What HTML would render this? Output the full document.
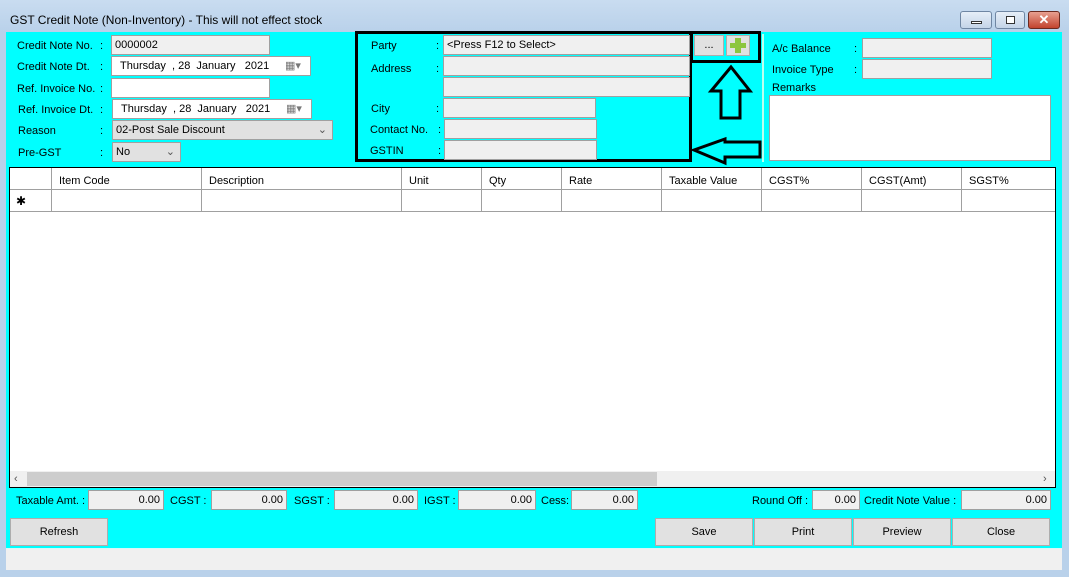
<!DOCTYPE html>
<html><head><style>
*{box-sizing:border-box;margin:0;padding:0}
body{width:1069px;height:577px;background:#b9d1ea;font-family:"Liberation Sans",sans-serif;font-size:11px;color:#000;position:relative;overflow:hidden}
.a{position:absolute}
.l{position:absolute;white-space:nowrap;line-height:14px}
.tb{position:absolute;background:#f0f0f0;border:1px solid #a0a0a0;height:20px;line-height:18px;padding-left:3px;white-space:nowrap}
.w{background:#fff}
.btn{position:absolute;background:#e1e1e1;border:1px solid #adadad;text-align:center;line-height:26px;height:28px}
.num{text-align:right;padding-right:3px}
</style></head><body>
<div class="a" style="left:0;top:0;width:1069px;height:32px;background:linear-gradient(#c9dcf0,#b9d1ea)"></div>
<div class="l" style="left:10px;top:13px;font-size:12px">GST Credit Note (Non-Inventory) - This will not effect stock</div>
<div class="a" style="left:960px;top:11px;width:32px;height:18px;border:1px solid #6f86a3;border-radius:3px;background:linear-gradient(#e6eef8,#c4d4e8)"><div class="a" style="left:10px;top:9px;width:11px;height:3px;border:1px solid #333;background:#fff"></div></div>
<div class="a" style="left:995px;top:11px;width:30px;height:18px;border:1px solid #6f86a3;border-radius:3px;background:linear-gradient(#e6eef8,#c4d4e8)"><div class="a" style="left:10px;top:4px;width:9px;height:8px;border:1px solid #333;background:#fff"></div></div>
<div class="a" style="left:1028px;top:11px;width:32px;height:18px;border:1px solid #6b2a20;border-radius:3px;background:linear-gradient(#e8a090,#c2432e);color:#fff;text-align:center;font-weight:bold;font-size:13px;line-height:16px">✕</div>

<div class="a" style="left:6px;top:32px;width:1056px;height:516px;background:#00ffff"></div>
<div class="a" style="left:6px;top:548px;width:1056px;height:22px;background:#f0f0f0;border-top:1px solid #d8f8f8"></div>

<!-- left block -->
<div class="l" style="left:17px;top:39px">Credit Note No.</div><div class="l" style="left:100px;top:39px">:</div>
<div class="tb" style="left:111px;top:35px;width:159px">0000002</div>
<div class="l" style="left:17px;top:60px">Credit Note Dt.</div><div class="l" style="left:100px;top:60px">:</div>
<div class="tb w" style="left:111px;top:56px;width:200px;padding-left:8px">Thursday &nbsp;, 28 &nbsp;January &nbsp;&nbsp;2021<span style="position:absolute;left:173px;top:0;color:#777">▦▾</span></div>
<div class="l" style="left:17px;top:82px">Ref. Invoice No.</div><div class="l" style="left:100px;top:82px">:</div>
<div class="tb w" style="left:111px;top:78px;width:159px"></div>
<div class="l" style="left:18px;top:103px">Ref. Invoice Dt.</div><div class="l" style="left:100px;top:103px">:</div>
<div class="tb w" style="left:112px;top:99px;width:200px;padding-left:8px">Thursday &nbsp;, 28 &nbsp;January &nbsp;&nbsp;2021<span style="position:absolute;left:173px;top:0;color:#777">▦▾</span></div>
<div class="l" style="left:18px;top:124px">Reason</div><div class="l" style="left:100px;top:124px">:</div>
<div class="tb" style="left:112px;top:120px;width:221px;background:#e1e1e1">02-Post Sale Discount<span style="position:absolute;right:5px;top:0;color:#555">⌄</span></div>
<div class="l" style="left:18px;top:146px">Pre-GST</div><div class="l" style="left:100px;top:146px">:</div>
<div class="tb" style="left:112px;top:142px;width:69px;background:#e1e1e1">No<span style="position:absolute;right:5px;top:0;color:#555">⌄</span></div>

<!-- party block -->
<div class="a" style="left:355px;top:31px;width:337px;height:131px;border:3px solid #000"></div>
<div class="a" style="left:690px;top:31px;width:71px;height:32px;border:3px solid #000"></div>
<div class="l" style="left:371px;top:39px">Party</div><div class="l" style="left:436px;top:39px">:</div>
<div class="tb" style="left:443px;top:35px;width:247px">&lt;Press F12 to Select&gt;</div>
<div class="l" style="left:371px;top:62px">Address</div><div class="l" style="left:436px;top:62px">:</div>
<div class="tb" style="left:443px;top:56px;width:247px"></div>
<div class="tb" style="left:443px;top:77px;width:247px"></div>
<div class="l" style="left:371px;top:102px">City</div><div class="l" style="left:436px;top:102px">:</div>
<div class="tb" style="left:443px;top:98px;width:153px"></div>
<div class="l" style="left:370px;top:123px">Contact No.</div><div class="l" style="left:438px;top:123px">:</div>
<div class="tb" style="left:444px;top:119px;width:153px"></div>
<div class="l" style="left:370px;top:144px">GSTIN</div><div class="l" style="left:438px;top:144px">:</div>
<div class="tb" style="left:444px;top:140px;width:153px"></div>
<div class="btn" style="left:694px;top:35px;width:30px;height:21px;line-height:19px">...</div>
<div class="btn" style="left:726px;top:35px;width:24px;height:21px"><div class="a" style="left:8px;top:2px;width:6px;height:15px;background:#8cc63f"></div><div class="a" style="left:3px;top:7px;width:16px;height:5px;background:#8cc63f"></div></div>
<svg class="a" style="left:0;top:0" width="1069" height="200"><path d="M731 67 L711 91 L721 91 L721 118 L740 118 L740 91 L750 91 Z" fill="none" stroke="#000" stroke-width="3"/><path d="M694 150 L725 139 L725 142 L760 142 L760 157 L725 157 L725 163 Z" fill="none" stroke="#000" stroke-width="3"/></svg>

<div class="a" style="left:762px;top:34px;width:2px;height:128px;background:#bfe"></div>
<div class="l" style="left:772px;top:42px">A/c Balance</div><div class="l" style="left:854px;top:42px">:</div>
<div class="tb" style="left:862px;top:38px;width:130px"></div>
<div class="l" style="left:772px;top:63px">Invoice Type</div><div class="l" style="left:854px;top:63px">:</div>
<div class="tb" style="left:862px;top:59px;width:130px"></div>
<div class="l" style="left:772px;top:81px">Remarks</div>
<div class="a" style="left:769px;top:95px;width:282px;height:66px;background:#fff;border:1px solid #a0a0a0"></div>

<!-- grid -->
<div class="a" style="left:9px;top:167px;width:1047px;height:321px;background:#fff;border:1px solid #000"></div>
<div class="a" style="left:10px;top:168px;width:1045px;height:22px;border-bottom:1px solid #a0a0a0"></div>
<div class="a" style="left:10px;top:190px;width:1045px;height:22px;border-bottom:1px solid #a0a0a0"></div>
<div class="a" style="left:51px;top:168px;width:1px;height:43px;background:#a0a0a0"></div>
<div class="a" style="left:201px;top:168px;width:1px;height:43px;background:#a0a0a0"></div>
<div class="a" style="left:401px;top:168px;width:1px;height:43px;background:#a0a0a0"></div>
<div class="a" style="left:481px;top:168px;width:1px;height:43px;background:#a0a0a0"></div>
<div class="a" style="left:561px;top:168px;width:1px;height:43px;background:#a0a0a0"></div>
<div class="a" style="left:661px;top:168px;width:1px;height:43px;background:#a0a0a0"></div>
<div class="a" style="left:761px;top:168px;width:1px;height:43px;background:#a0a0a0"></div>
<div class="a" style="left:861px;top:168px;width:1px;height:43px;background:#a0a0a0"></div>
<div class="a" style="left:961px;top:168px;width:1px;height:43px;background:#a0a0a0"></div>
<div class="l" style="left:59px;top:174px">Item Code</div>
<div class="l" style="left:209px;top:174px">Description</div>
<div class="l" style="left:409px;top:174px">Unit</div>
<div class="l" style="left:489px;top:174px">Qty</div>
<div class="l" style="left:569px;top:174px">Rate</div>
<div class="l" style="left:669px;top:174px">Taxable Value</div>
<div class="l" style="left:769px;top:174px">CGST%</div>
<div class="l" style="left:869px;top:174px">CGST(Amt)</div>
<div class="l" style="left:969px;top:174px">SGST%</div>
<div class="l" style="left:16px;top:194px;font-size:12px">✱</div>
<div class="a" style="left:10px;top:471px;width:1045px;height:16px;background:#f0f0f0"></div>
<div class="a" style="left:27px;top:472px;width:630px;height:14px;background:#cdcdcd"></div>
<div class="l" style="left:14px;top:472px;color:#555">&lsaquo;</div>
<div class="l" style="left:1043px;top:472px;color:#555">&rsaquo;</div>

<!-- totals -->
<div class="l" style="left:16px;top:494px">Taxable Amt. :</div>
<div class="tb num" style="left:88px;top:490px;width:76px">0.00</div>
<div class="l" style="left:170px;top:494px">CGST :</div>
<div class="tb num" style="left:211px;top:490px;width:76px">0.00</div>
<div class="l" style="left:294px;top:494px">SGST :</div>
<div class="tb num" style="left:334px;top:490px;width:84px">0.00</div>
<div class="l" style="left:424px;top:494px">IGST :</div>
<div class="tb num" style="left:458px;top:490px;width:78px">0.00</div>
<div class="l" style="left:541px;top:494px">Cess:</div>
<div class="tb num" style="left:571px;top:490px;width:67px">0.00</div>
<div class="l" style="left:752px;top:494px">Round Off :</div>
<div class="tb num" style="left:812px;top:490px;width:48px">0.00</div>
<div class="l" style="left:864px;top:494px">Credit Note Value :</div>
<div class="tb num" style="left:961px;top:490px;width:90px">0.00</div>

<div class="btn" style="left:10px;top:518px;width:98px">Refresh</div>
<div class="btn" style="left:655px;top:518px;width:98px">Save</div>
<div class="btn" style="left:754px;top:518px;width:98px">Print</div>
<div class="btn" style="left:853px;top:518px;width:98px">Preview</div>
<div class="btn" style="left:952px;top:518px;width:98px">Close</div>
</body></html>
